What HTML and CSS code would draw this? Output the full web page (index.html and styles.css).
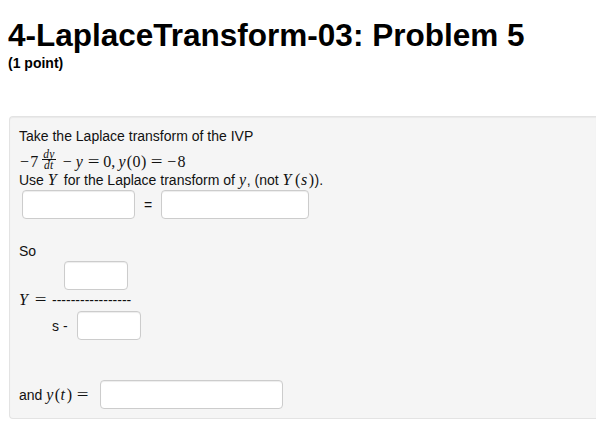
FILE: index.html
```html
<!DOCTYPE html>
<html>
<head>
<meta charset="utf-8">
<title>4-LaplaceTransform-03: Problem 5</title>
<link rel="stylesheet" href="styles.css">
</head>
<body>
<h1 class="title">4-LaplaceTransform-03: Problem 5</h1>
<div class="points">(1 point)</div>
<div class="well">
  <div class="line">Take the Laplace transform of the IVP</div>
  <div class="line ivp"><span class="m"><span class="mo">−</span>7<span class="frac"><span class="num"><i class="d">d</i><i class="y">y</i></span><span class="den"><i class="d">d</i><i class="t">t</i></span></span><span class="mo bin">−</span><i class="y">y</i><span class="mo rel">=</span>0,<i class="y sp">y</i><span class="p">(</span>0<span class="p">)</span><span class="mo rel">=</span><span class="mo">−</span>8</span></div>
  <div class="line">Use <span class="m"><i class="Y">Y</i></span> for the Laplace transform of <span class="m"><i class="y">y</i></span>, (not <span class="m"><i class="Y">Y</i><span class="p">(</span><i class="s">s</i><span class="p">)</span></span>).</div>
  <div class="eqrow"><input class="ans w113" type="text"><span class="eqsign">=</span><input class="ans w148" type="text"></div>
  <div class="line so">So</div>
  <div class="yfrac">
    <input class="ans w64 ytop" type="text">
    <div class="ylabel"><span class="m"><i class="Y">Y</i><span class="mo rel">=</span></span></div>
    <div class="dashes">-----------------</div>
    <div class="sden"><span>s -</span><input class="ans w64" type="text"></div>
  </div>
  <div class="androw"><span>and</span><span class="m ay"><i class="y">y</i><span class="p">(</span><i class="t">t</i><span class="p">)</span><span class="mo rel">=</span></span><input class="ans w183" type="text"></div>
</div>
</body>
</html>
```

FILE: styles.css
```css
html, body {
  margin: 0;
  padding: 0;
  background: #fff;
}

body {
  padding-left: 8px;
  font-family: "Liberation Sans", Arial, sans-serif;
  color: #000;
}

.title {
  margin: 17px 0 0;
  font-size: 31.5px;
  line-height: 36px;
  font-weight: bold;
}

.points {
  margin-top: 2px;
  font-size: 14px;
  line-height: 16px;
  font-weight: bold;
}

.well {
  margin: 45px 0 0 1px;
  padding: 9px;
  border: 1px solid #e3e3e3;
  border-right: 0;
  border-radius: 4px 0 0 4px;
  background: #f5f5f5;
  box-shadow: inset 0 1px 1px rgba(0, 0, 0, 0.05);
  font-size: 14px;
  line-height: 20px;
  color: #111;
}

.line {
  height: 20px;
}

.ivp {
  height: 24px;
  box-sizing: border-box;
  padding-top: 3px;
}

/* math */
.m {
  font-family: "Liberation Serif", "Times New Roman", serif;
  font-size: 16px;
  line-height: 1;
  white-space: nowrap;
}

.m i {
  font-style: italic;
}

.mo {
  display: inline-block;
  width: 0.7em;
  text-align: center;
}

.rel {
  margin: 0 0.26em;
  transform: scaleX(1.3);
}

.bin {
  margin: 0 0.18em 0 0.3em;
}

.p {
  display: inline-block;
  width: 0.389em;
  text-align: center;
}

.sp {
  margin-left: 0.2em;
}

i.y { padding-right: 0.05em; }
i.Y { padding-right: 0.2em; }
i.s { padding-right: 0.08em; }
i.t { padding-right: 0.08em; }
i.d { padding-right: 0.02em; }

.frac {
  display: inline-flex;
  flex-direction: column;
  vertical-align: 9px;
  margin: 0 0.1em 0 0.35em;
  font-size: 11.5px;
  line-height: 10px;
  text-align: center;
}

.num {
  border-bottom: 1px solid currentColor;
  padding: 0 1px;
}

.den {
  padding: 0 1px;
}

/* inputs */
.ans {
  box-sizing: border-box;
  height: 29px;
  margin: 0;
  padding: 4px 6px;
  border: 1px solid #ccc;
  border-radius: 4px;
  background: #fff;
  box-shadow: inset 0 1px 1px rgba(0, 0, 0, 0.075);
  font: 14px "Liberation Sans", Arial, sans-serif;
}

.w113 { width: 113px; }
.w148 { width: 148px; }
.w64 { width: 64px; }
.w183 { width: 183px; }

.eqrow {
  display: flex;
  align-items: center;
  height: 29px;
  padding-left: 3px;
}

.eqsign {
  margin: 0 9px;
}

.so {
  margin-top: 22px;
}

.yfrac {
  display: grid;
  grid-template-columns: 33px auto;
  grid-template-rows: 29px 21px 29px;
  justify-content: start;
}

.ytop {
  grid-column: 2;
  grid-row: 1;
  justify-self: center;
}

.ylabel {
  grid-column: 1;
  grid-row: 2;
  line-height: 21px;
}

.dashes {
  grid-column: 2;
  grid-row: 2;
  line-height: 21px;
}

.sden {
  grid-column: 2;
  grid-row: 3;
  display: flex;
  align-items: center;
  gap: 9px;
}

.androw {
  display: flex;
  align-items: center;
  height: 29px;
  margin-top: 40px;
}

.ay {
  margin-left: 4px;
  margin-right: 8px;
}
```
